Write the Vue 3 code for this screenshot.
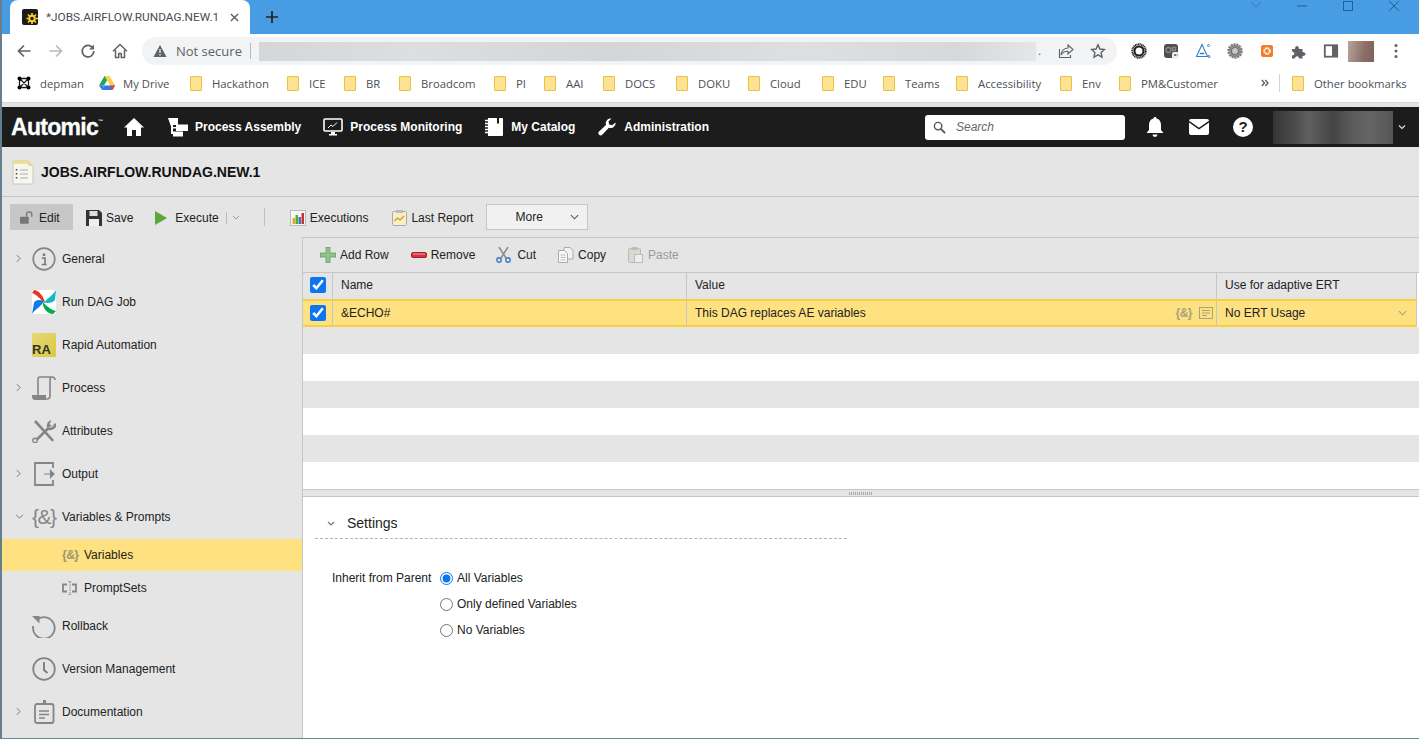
<script setup>
const bookmarks = [
  { label: 'Hackathon', width: 97 }, { label: 'ICE', width: 57 }, { label: 'BR', width: 55 },
  { label: 'Broadcom', width: 95 }, { label: 'PI', width: 50 }, { label: 'AAI', width: 59 },
  { label: 'DOCS', width: 73 }, { label: 'DOKU', width: 72 }, { label: 'Cloud', width: 74 },
  { label: 'EDU', width: 61 }, { label: 'Teams', width: 73 }, { label: 'Accessibility', width: 104 },
  { label: 'Env', width: 59 }, { label: 'PM&Customer', width: 142 }
]
const stripes = [0, 1, 2, 3, 4, 5]
</script>

<template>
  <div class="screen">
    <header class="tabstrip">
      <div class="tab">
        <svg class="favicon" viewBox="0 0 16 16">
          <rect width="16" height="16" rx="2" fill="#1b1b1b" />
          <circle cx="10" cy="9.500" r="2.800" fill="none" stroke="#f5d327" stroke-width="2" />
          <path d="M10 4v2M10 13v2M4.500 9.500h2M13.500 9.500H16M6 5.500l1.500 1.500M12.500 12l1.500 1.500M14 5.500L12.500 7M7.500 12L6 13.500" stroke="#f5d327" stroke-width="1.700" />
        </svg>
        <span class="tab-title">*JOBS.AIRFLOW.RUNDAG.NEW.1</span>
        <svg class="tab-close" viewBox="0 0 10 10"><path d="M1 1l8 8M9 1l-8 8" stroke="#5f6368" stroke-width="1.600" /></svg>
      </div>
      <svg class="new-tab" viewBox="0 0 12 12"><path d="M6 0v12M0 6h12" stroke="#202124" stroke-width="1.700" /></svg>
      <div class="window-controls">
        <svg viewBox="0 0 12 12" class="w-chev"><path d="M1 2l5 5 5-5" fill="none" stroke="#2f79b8" stroke-width="1" /></svg>
        <svg viewBox="0 0 12 12" class="w-min"><path d="M1 6h10" stroke="#26608f" stroke-width="1" /></svg>
        <svg viewBox="0 0 12 12" class="w-max"><rect x="1.500" y="1.500" width="9" height="9" fill="none" stroke="#26608f" stroke-width="1" /></svg>
        <svg viewBox="0 0 12 12" class="w-close"><path d="M1 1l10 10M11 1L1 11" stroke="#26608f" stroke-width="1" /></svg>
      </div>
    </header>

    <div class="browser-bar">
      <div class="nav-buttons">
        <svg viewBox="0 0 16 16"><path d="M14.500 8H2.500M8 2.500L2.500 8 8 13.500" fill="none" stroke="#5f6368" stroke-width="1.700" /></svg>
        <svg viewBox="0 0 16 16"><path d="M1.500 8h12M8 2.500L13.500 8 8 13.500" fill="none" stroke="#b8babc" stroke-width="1.700" /></svg>
        <svg viewBox="0 0 16 16"><path d="M13 5.200A5.800 5.800 0 1 0 13.800 8" fill="none" stroke="#5f6368" stroke-width="1.700" /><path d="M14 1.500v5h-5z" fill="#5f6368" /></svg>
        <svg viewBox="0 0 16 16"><path d="M1 8.200L8 1.500l7 6.700M3.500 7v7.500h3.200v-4h2.600v4h3.200V7" fill="none" stroke="#5f6368" stroke-width="1.500" /></svg>
      </div>
      <div class="omnibox">
        <svg class="warn" viewBox="0 0 14 14"><path d="M7 1l6.500 12H.5z" fill="#5f6368" /><path d="M7 5v4M7 10v1.600" stroke="#f1f3f4" stroke-width="1.300" /></svg>
        <span class="not-secure">Not secure</span>
        <i class="omni-divider"></i>
        <div class="url-blur"></div>
        <span class="url-dot">.</span>
        <svg class="share" viewBox="0 0 16 16"><path d="M10 2l5 4.500L10 11V8.300C6.500 8.300 4.500 9.500 3 12c.4-4 2.600-6.600 7-7z" fill="none" stroke="#5f6368" stroke-width="1.100" /><path d="M1.500 6v8.500h11V12" fill="none" stroke="#5f6368" stroke-width="1.100" /></svg>
        <svg class="star" viewBox="0 0 16 16"><path d="M8 1.800l1.900 4.200 4.600.5-3.400 3.100.9 4.500L8 11.800l-4 2.300.9-4.500-3.400-3.100 4.600-.5z" fill="none" stroke="#5f6368" stroke-width="1.400" /></svg>
      </div>
      <div class="extensions">
        <svg viewBox="0 0 16 16"><circle cx="8" cy="8" r="6.700" fill="none" stroke="#1d1d1d" stroke-width="2" stroke-dasharray="1.100 .5" /><circle cx="8" cy="8" r="4.500" fill="none" stroke="#1d1d1d" stroke-width="2" /></svg>
        <svg viewBox="0 0 16 16"><rect x="1" y="1" width="14" height="14" rx="3" fill="#4f4f4f" /><circle cx="5.500" cy="7" r="2.500" fill="none" stroke="#8a8a8a" stroke-width="1.300" /><path d="M9.500 4.500h3v3h-3z" fill="none" stroke="#8a8a8a" stroke-width="1.300" /><rect x="9" y="9" width="7" height="7" rx="2" fill="#f2f2f2" /><path d="M11 11h2v2h-2zM13 12l1.500-1v2z" fill="#777" /></svg>
        <svg viewBox="0 0 16 16"><path d="M7 1.500L1.500 13.500h11z" fill="none" stroke="#2f7fc4" stroke-width="1.100" /><path d="M4.800 10.500h4.400" stroke="#2f7fc4" stroke-width="1.500" /><circle cx="13.500" cy="2.500" r="1" fill="none" stroke="#2f7fc4" /><circle cx="14" cy="13.500" r="1" fill="none" stroke="#2f7fc4" /></svg>
        <svg viewBox="0 0 16 16"><circle cx="8" cy="8" r="6.200" fill="#9b9b9b" stroke="#7d7d7d" stroke-width="3" stroke-dasharray="2 .7" /><circle cx="8" cy="8" r="3.500" fill="#c8c8c8" stroke="#707070" stroke-width="1.200" /></svg>
        <svg viewBox="0 0 16 16"><rect x="2" y="2" width="12" height="12" rx="2" fill="#f47b2a" /><circle cx="8" cy="8" r="2.800" fill="none" stroke="#fff" stroke-width="2" stroke-dasharray="1.600 .6" /></svg>
        <svg viewBox="0 0 16 16"><path d="M1 6h3c0-4 4-4 4 0h3.500v3c4 0 4 4 0 4V15.500H8c0-3-4-3-4 0H1v-3c3 0 3-4 0-4z" fill="#5f6368" /></svg>
        <svg viewBox="0 0 16 16"><rect x="1.800" y="2.300" width="12.400" height="11.400" fill="none" stroke="#5f6368" stroke-width="1.800" /><rect x="9" y="2" width="5" height="12" fill="#5f6368" /></svg>
      </div>
      <div class="avatar"></div>
      <svg class="kebab" viewBox="0 0 4 16"><circle cx="2" cy="2.500" r="1.500" fill="#5f6368" /><circle cx="2" cy="8" r="1.500" fill="#5f6368" /><circle cx="2" cy="13.500" r="1.500" fill="#5f6368" /></svg>
    </div>

    <nav class="bookmarks">
      <div class="bm bm-depman">
        <svg viewBox="0 0 14 14"><path d="M2.500 2.500h9v9h-9zM2.500 2.500l9 9M11.500 2.500l-9 9" fill="none" stroke="#1c1c1c" stroke-width="1.300" /><circle cx="2.500" cy="2.500" r="2" /><circle cx="11.500" cy="2.500" r="2" /><circle cx="2.500" cy="11.500" r="2" /><circle cx="11.500" cy="11.500" r="2" /></svg>
        <span>depman</span>
      </div>
      <div class="bm bm-drive">
        <svg viewBox="0 0 16 14"><path d="M5.500 0h5L5 9.500H0z" fill="#1fa463" /><path d="M5.500 0h5L16 9.500h-5z" fill="#ffd04b" /><path d="M0 9.500h5.200L3 14z" fill="#3777e3" /><path d="M3 14l2.300-4.500H16L13.500 14z" fill="#3777e3" /><path d="M11 9.500h5L13.500 14z" fill="#ea4335" /></svg>
        <span>My Drive</span>
      </div>
      <div v-for="b in bookmarks" :key="b.label" class="bm bm-folder" :style="{ width: b.width + 'px' }">
        <i class="folder"></i>
        <span>{{ b.label }}</span>
      </div>
      <svg class="chevrons" viewBox="0 0 8 8"><path d="M.8 1l2.700 3-2.700 3M4.300 1L7 4 4.300 7" fill="none" stroke="#5f6368" stroke-width="1.400" /></svg>
      <i class="bm-sep"></i>
      <div class="bm bm-other"><i class="folder"></i><span>Other bookmarks</span></div>
    </nav>

    <div class="browser-edge"></div>

    <div class="app-nav">
      <div class="logo">Automic<sup>™</sup></div>
      <svg class="home" viewBox="0 0 20 18"><path d="M10 0L0 9.500h3V18h5v-6h4v6h5V9.500h3z" fill="#fff" /></svg>
      <div class="nav-item nav-pa">
        <svg viewBox="0 0 20 19"><path d="M0 0h10v7H5v2h3V6.500h12V13H8v-2.500H5V14h0v0h0v0H5v0h0z" fill="#fff" /><path d="M3 7h2v9H3z" fill="#fff" /><rect x="5" y="13.500" width="10" height="5" fill="#fff" /></svg>
        <span>Process Assembly</span>
      </div>
      <div class="nav-item nav-pm">
        <svg viewBox="0 0 20 18"><rect x="1" y="1" width="18" height="12" rx="1" fill="none" stroke="#fff" stroke-width="1.600" /><path d="M5 10l3-3 2 1.500L14 4.500" fill="none" stroke="#fff" /><path d="M8 14h4v2h2v1.500H6V16h2z" fill="#fff" /></svg>
        <span>Process Monitoring</span>
      </div>
      <div class="nav-item nav-mc">
        <svg viewBox="0 0 18 18"><path d="M3 0h14a1 1 0 0 1 1 1v16a1 1 0 0 1-1 1H3z" fill="#fff" /><path d="M12 0h2v6l-1-1-1 1z" fill="#1c1c1c" /><path d="M0 2.500h3.500M0 5.500h3.500M0 8.500h3.500M0 11.500h3.500M0 14.500h3.500" stroke="#fff" stroke-width="1.500" /></svg>
        <span>My Catalog</span>
      </div>
      <div class="nav-item nav-ad">
        <svg viewBox="0 0 18 18"><path d="M17.500 4.500a5 5 0 0 1-6.700 5.300L4 17a2.300 2.300 0 0 1-3.200-3.200L8 7A5 5 0 0 1 13.500.5L10.500 3.500l.7 3 3 .7z" fill="#fff" /></svg>
        <span>Administration</span>
      </div>
      <div class="search">
        <svg viewBox="0 0 14 14"><circle cx="5.500" cy="5.500" r="4" fill="none" stroke="#555" stroke-width="1.500" /><path d="M8.500 8.500L13 13" stroke="#555" stroke-width="2" /></svg>
        <span>Search</span>
      </div>
      <svg class="nav-bell" viewBox="0 0 18 20"><path d="M9 0c1 0 1.500.7 1.500 1.600C13.500 2.300 15 5 15 8v5l2.500 3H.5L3 13V8c0-3 1.500-5.700 4.500-6.400C7.500.7 8 0 9 0zM6.500 17.500h5a2.500 2.500 0 0 1-5 0z" fill="#fff" /></svg>
      <svg class="nav-mail" viewBox="0 0 20 16"><rect width="20" height="16" rx="2" fill="#fff" /><path d="M0 2.500l10 7 10-7" fill="none" stroke="#1c1c1c" stroke-width="1.500" /></svg>
      <div class="nav-help">?</div>
      <div class="user-blur"></div>
      <svg class="user-chev" viewBox="0 0 8 6"><path d="M1 1.500l3 3 3-3" fill="none" stroke="#ddd" stroke-width="1.200" /></svg>
    </div>

    <div class="title-band">
      <svg class="job-icon" viewBox="0 0 22 25">
        <path d="M1 1h15l5 5v18H1z" fill="#f7f7f0" stroke="#c9c9b8" />
        <path d="M16 1l5 5h-5z" fill="#e8dc90" />
        <rect x="1" y="1" width="15" height="3" fill="#efe08e" />
        <path d="M4.500 9v1.500M4.500 13v1.500M4.500 17v1.500" stroke="#444" stroke-width="1.500" />
        <path d="M8 10h8M8 14h8M8 18h8" stroke="#aaa" stroke-width="1.200" />
      </svg>
      <h1>JOBS.AIRFLOW.RUNDAG.NEW.1</h1>
    </div>

    <div class="toolbar">
      <div class="tool tool-edit">
        <svg viewBox="0 0 16 14"><rect x="0" y="6" width="10" height="8" rx="1" fill="#777" /><path d="M7.500 6V3.500a3 3 0 0 1 6 0V6" fill="none" stroke="#777" stroke-width="1.500" /></svg>
        <span>Edit</span>
      </div>
      <div class="tool tool-save">
        <svg viewBox="0 0 16 16"><path d="M0 0h13l3 3v13H0z" fill="#333" /><rect x="3.500" y="1" width="8" height="5" fill="#ddd" /><rect x="3" y="9" width="10" height="7" fill="#eee" /></svg>
        <span>Save</span>
      </div>
      <div class="tool tool-exec">
        <svg viewBox="0 0 12 14"><path d="M0 0l12 7-12 7z" fill="#5aa73c" /></svg>
        <span>Execute</span>
        <i class="tool-mini-sep"></i>
        <svg class="mini-chev" viewBox="0 0 8 6"><path d="M1 1l3 3 3-3" fill="none" stroke="#999" /></svg>
      </div>
      <i class="tool-sep"></i>
      <div class="tool tool-runs">
        <svg viewBox="0 0 16 16"><rect x=".5" y=".5" width="15" height="15" fill="#f7f7f7" stroke="#bbb" /><rect x="2.500" y="8" width="2.500" height="6" fill="#e8a91d" /><rect x="5.500" y="5" width="2.500" height="9" fill="#5aa73c" /><rect x="8.500" y="7" width="2.500" height="7" fill="#3a78c2" /><rect x="11.500" y="3" width="2.500" height="11" fill="#c93030" /></svg>
        <span>Executions</span>
      </div>
      <div class="tool tool-report">
        <svg viewBox="0 0 15 16"><rect x=".5" y="1.500" width="14" height="14" rx="1" fill="#f5efc8" stroke="#aaa" /><rect x="4" y="0" width="7" height="3" fill="#bbb" /><path d="M2.500 11l3-3 2.500 2 4-4" fill="none" stroke="#d29a1a" stroke-width="1.300" /></svg>
        <span>Last Report</span>
      </div>
      <div class="more-btn">
        <span>More</span>
        <svg viewBox="0 0 10 6"><path d="M1 1l4 4 4-4" fill="none" stroke="#555" stroke-width="1.200" /></svg>
      </div>
    </div>

    <div class="workspace">
      <aside class="sidebar">
        <div class="side-row">
          <svg class="arrow" viewBox="0 0 6 10"><path d="M1 1l4 4-4 4" fill="none" stroke="#777" stroke-width="1.200" /></svg>
          <svg class="side-icon" viewBox="0 0 24 24"><circle cx="12" cy="12" r="10.800" fill="none" stroke="#858585" stroke-width="1.700" /><path d="M12 6.500v2.500" stroke="#777" stroke-width="2.400" /><path d="M9.800 11h3.200v6.500h1.500M9.800 17.500H14" fill="none" stroke="#777" stroke-width="1.600" /></svg>
          <span>General</span>
        </div>
        <div class="side-row">
          <svg class="side-icon" viewBox="0 0 24 24">
            <rect width="24" height="24" fill="#fff" />
            <path d="M13 13C12 7 8 1 2 0L0 3c4 1 8 6 13 10z" fill="#e43921" />
            <path d="M12 11C7 9 3 10 2 13L0 24c3-5 9-7 12-13z" fill="#0c7ce8" />
            <path d="M11 12c-1 5 4 12 10 12l3-3c-4-1-9-4-13-9z" fill="#00ad46" />
            <path d="M12 12.500c5 1 9 0 11-2.500l1-10c-3 5-8 8-12 12.500z" fill="#11b8c8" />
          </svg>
          <span>Run DAG Job</span>
        </div>
        <div class="side-row">
          <div class="ra-icon">RA</div>
          <span>Rapid Automation</span>
        </div>
        <div class="side-row">
          <svg class="arrow" viewBox="0 0 6 10"><path d="M1 1l4 4-4 4" fill="none" stroke="#777" stroke-width="1.200" /></svg>
          <svg class="side-icon" viewBox="0 0 24 24"><path d="M6 21V3c0-1.500 1-2 2-2h12c2 0 3 1 3 3M20 1c-1.500 0-2 1-2 2.500V20c0 2-1 3-3 3" fill="none" stroke="#858585" stroke-width="1.600" /><path d="M0 19h14v1.500c0 1.500.5 2.500 1 3.500H3c-2 0-3-1.500-3-3z" fill="#858585" /></svg>
          <span>Process</span>
        </div>
        <div class="side-row">
          <svg class="side-icon" viewBox="0 0 24 24"><path d="M4 1l18 20-1.700 1.800L2 3z" fill="#858585" /><path d="M23.500 4.500A5.500 5.500 0 0 1 16 9.500L4.800 20.500" fill="none" stroke="#858585" stroke-width="2.600" /><path d="M23.500 4.500l-3.500 2.500-2.500-2 2-4a5.500 5.500 0 0 0-4 8z" fill="#858585" /><circle cx="3" cy="21.500" r="2.200" fill="none" stroke="#858585" stroke-width="1.400" /></svg>
          <span>Attributes</span>
        </div>
        <div class="side-row">
          <svg class="arrow" viewBox="0 0 6 10"><path d="M1 1l4 4-4 4" fill="none" stroke="#777" stroke-width="1.200" /></svg>
          <svg class="side-icon" viewBox="0 0 24 24"><path d="M21 6V1H3v22h18v-5" fill="none" stroke="#858585" stroke-width="1.800" /><path d="M12 12h10M18.500 8.500L22 12l-3.500 3.500z" fill="#858585" stroke="#858585" stroke-width="1.200" /></svg>
          <span>Output</span>
        </div>
        <div class="side-row">
          <svg class="arrow arrow-open" viewBox="0 0 10 6"><path d="M1 1l4 4 4-4" fill="none" stroke="#777" stroke-width="1.200" /></svg>
          <span class="var-icon">{&amp;}</span>
          <span>Variables &amp; Prompts</span>
        </div>
        <div class="side-sub side-sub-first selected">
          <span class="var-mini">{&amp;}</span>
          <span>Variables</span>
        </div>
        <div class="side-sub side-sub-second">
          <svg class="sub-icon" viewBox="0 0 16 14"><path d="M5 3H1v7h4M10 3h4v7h-4" fill="none" stroke="#858585" stroke-width="1.800" transform="translate(0 .5)" /><path d="M8 1v12M6.500.5h3M6.500 13.500h3" stroke="#858585" stroke-dasharray="1.500 1" fill="none" /></svg>
          <span>PromptSets</span>
        </div>
        <div class="side-row side-row-after">
          <svg class="side-icon" viewBox="0 0 24 24"><path d="M4.500 6A10.800 10.800 0 1 1 1.200 12" fill="none" stroke="#858585" stroke-width="1.800" /><path d="M0 1h7.500v7.500z" fill="#858585" transform="translate(0 1)" /></svg>
          <span>Rollback</span>
        </div>
        <div class="side-row">
          <svg class="side-icon" viewBox="0 0 24 24"><circle cx="12" cy="12" r="10.800" fill="none" stroke="#858585" stroke-width="1.800" /><path d="M12 5v8l3.500 3" fill="none" stroke="#777" stroke-width="1.800" /></svg>
          <span>Version Management</span>
        </div>
        <div class="side-row">
          <svg class="arrow" viewBox="0 0 6 10"><path d="M1 1l4 4-4 4" fill="none" stroke="#777" stroke-width="1.200" /></svg>
          <svg class="side-icon" viewBox="0 0 24 24"><rect x="3" y="4" width="18.500" height="19" rx="2" fill="none" stroke="#858585" stroke-width="1.800" /><path d="M8 5V3h3V0h3v3h3v2z" fill="#858585" /><path d="M7 11h10M7 14.500h10M7 18h6" stroke="#858585" stroke-width="1.500" /></svg>
          <span>Documentation</span>
        </div>
      </aside>

      <main class="main">
        <div class="actions">
          <div class="action a-add">
            <svg viewBox="0 0 16 16"><path d="M6 0h4v6h6v4h-6v6H6v-6H0V6h6z" fill="#8fc488" stroke="#4f8a4a" stroke-width=".6" /></svg>
            <span>Add Row</span>
          </div>
          <div class="action a-remove">
            <svg viewBox="0 0 16 6"><rect x=".5" y=".5" width="15" height="5" rx="1.500" fill="#d9333f" stroke="#a52028" /><path d="M2 2h12" stroke="#f0a0a0" /></svg>
            <span>Remove</span>
          </div>
          <div class="action a-cut">
            <svg viewBox="0 0 15 16"><path d="M3 0l7 11M12 0L5 11" stroke="#8a8a8a" stroke-width="1.500" /><circle cx="3" cy="13" r="2.200" fill="none" stroke="#3a78c2" stroke-width="1.400" /><circle cx="12" cy="13" r="2.200" fill="none" stroke="#3a78c2" stroke-width="1.400" /></svg>
            <span>Cut</span>
          </div>
          <div class="action a-copy">
            <svg viewBox="0 0 16 16"><path d="M6 .5h6l3 3V12H6z" fill="#f2f2f2" stroke="#aaa" /><path d="M.5 3.500h6l3 3v9h-9z" fill="#f8f8f8" stroke="#aaa" /><path d="M2.500 8h5M2.500 10.500h5M2.500 13h5" stroke="#bbb" /></svg>
            <span>Copy</span>
          </div>
          <div class="action a-paste">
            <svg viewBox="0 0 15 16"><rect x=".5" y="1.500" width="12" height="14" rx="1" fill="#ddd8ce" stroke="#bbb" /><rect x="3.500" y="0" width="6" height="3" fill="#bbb" /><rect x="6.500" y="7.500" width="8" height="8" fill="#eee" stroke="#bbb" /></svg>
            <span>Paste</span>
          </div>
        </div>

        <div class="grid-row grid-head">
          <div class="c-check"><input type="checkbox" checked /></div>
          <div class="c-name">Name</div>
          <div class="c-value">Value</div>
          <div class="c-ert">Use for adaptive ERT</div>
        </div>
        <div class="grid-row grid-selected">
          <div class="c-check"><input type="checkbox" checked /></div>
          <div class="c-name">&amp;ECHO#</div>
          <div class="c-value">
            <span class="value-text">This DAG replaces AE variables</span>
            <span class="value-var">{&amp;}</span>
            <svg class="value-note" viewBox="0 0 14 12"><rect x=".5" y=".5" width="13" height="11" fill="none" stroke="#a8a17a" /><path d="M3 3.500h8M3 6h8M3 8.500h5" stroke="#a8a17a" /></svg>
          </div>
          <div class="c-ert">
            <span class="value-text">No ERT Usage</span>
            <svg class="ert-chev" viewBox="0 0 10 6"><path d="M1 1l4 4 4-4" fill="none" stroke="#a8a17a" stroke-width="1.200" /></svg>
          </div>
        </div>
        <div v-for="s in stripes" :key="s" class="stripe" :class="{ 'stripe-gray': s % 2 === 0 }"></div>

        <div class="splitter"><i class="grip"></i></div>

        <section class="settings">
          <div class="settings-head">
            <svg viewBox="0 0 8 6"><path d="M1 1l3 3 3-3" fill="none" stroke="#777" stroke-width="1.200" /></svg>
            <span>Settings</span>
          </div>
          <div class="inherit">
            <div class="inherit-label">Inherit from Parent</div>
            <div class="radios">
              <label><input type="radio" name="inherit" checked /><span>All Variables</span></label>
              <label><input type="radio" name="inherit" /><span>Only defined Variables</span></label>
              <label><input type="radio" name="inherit" /><span>No Variables</span></label>
            </div>
          </div>
        </section>
      </main>
    </div>
  </div>
</template>

<style>
html, body { margin: 0; padding: 0; overflow: hidden; }
</style>

<style scoped>
* { box-sizing: border-box; }
.screen {
  width: 1419px; height: 739px; overflow: hidden;
  display: flex; flex-direction: column;
  border-left: 2px solid #64808f;
  border-bottom: 1px solid #5f8a8f;
  background: #fff;
  font: 12px "Liberation Sans", Arial, sans-serif;
  color: #222;
}
svg { display: block; flex: none; }

/* Browser chrome */
.tabstrip { height: 34px; background: #479ce3; display: flex; align-items: flex-end; position: relative; flex: none; }
.tab {
  margin-left: 8px; width: 240px; height: 34px; background: #fff;
  border-radius: 8px 8px 0 0; display: flex; align-items: center; padding: 0 0 0 12px;
}
.favicon { width: 16px; height: 16px; }
.tab-title { margin-left: 8px; width: 180px; overflow: hidden; white-space: nowrap; font: 11.800px Roboto, sans-serif; color: #4a4d51; }
.tab-close { width: 9px; height: 9px; margin-left: 4px; }
.new-tab { width: 12px; height: 12px; margin: 0 0 11px 16px; }
.window-controls { position: absolute; top: 0; left: 1248px; display: flex; }
.window-controls svg { width: 12px; height: 12px; margin-right: 34px; }

.browser-bar { height: 34px; display: flex; align-items: center; flex: none; background: #fff; }
.nav-buttons { display: flex; margin-left: 14px; width: 126px; }
.nav-buttons svg { width: 16px; height: 16px; margin-right: 16px; }
.omnibox {
  width: 975px; height: 28px; border-radius: 14px; background: #f1f3f4;
  display: flex; align-items: center; padding-left: 11px;
}
.warn { width: 14px; height: 14px; }
.not-secure { margin-left: 9px; font: 13px "Open Sans", sans-serif; color: #5f6368; width: 74px; white-space: nowrap; }
.omni-divider { width: 1px; height: 16px; background: #b5b7ba; }
.url-blur {
  width: 777px; height: 19px; margin-left: 8px;
  background: linear-gradient(90deg, #d4d6d7, #dcdedf 20%, #d3d5d6 45%, #dddfe0 70%, #d6d8d9 90%, #e4e6e7);
}
.url-dot { margin-left: 2px; width: 18px; color: #5f6368; }
.share { width: 16px; height: 16px; margin-left: 2px; }
.star { width: 16px; height: 16px; margin-left: 16px; }
.extensions { display: flex; margin-left: 14px; }
.extensions svg { width: 16px; height: 16px; margin-right: 16px; }
.avatar { width: 26px; height: 21px; margin-left: -7px; background: linear-gradient(100deg, #b9a49c, #8d6f68 60%, #7f5f5a); }
.kebab { width: 4px; height: 16px; margin-left: 20px; }

.bookmarks { height: 34px; padding-bottom: 4px; display: flex; align-items: center; flex: none; background: #fff; font: 11.300px "Open Sans", sans-serif; color: #4c4f54; white-space: nowrap; }
.bm { display: flex; align-items: center; flex: none; }
.bm-depman { width: 82px; margin-left: 15px; }
.bm-depman svg { width: 14px; height: 14px; margin-right: 9px; }
.bm-drive { width: 91px; }
.bm-drive svg { width: 16px; height: 14px; margin-right: 8px; }
.folder { width: 12px; height: 15px; flex: none; margin-right: 10px; background: #fde293; border: 1px solid #e8c33e; border-radius: 1px; }
.chevrons { width: 8px; height: 8px; margin-right: 10px; }
.bm-sep { width: 1px; height: 18px; background: #d0d2d4; margin: 0 12px 0 0; }
.browser-edge { height: 5px; flex: none; background: #e3e3e3; border-top: 1px solid #d6d6d6; }

/* App nav */
.app-nav { height: 40px; flex: none; background: #1c1c1c; display: flex; align-items: center; position: relative; color: #fff; }
.logo { margin-left: 9px; width: 113px; font: bold 23px "Liberation Sans", sans-serif; letter-spacing: -.7px; white-space: nowrap; -webkit-text-stroke: .3px #fff; }
.logo sup { font-size: 5px; vertical-align: 12px; letter-spacing: 0; -webkit-text-stroke: 0; }
.home { width: 20px; height: 18px; }
.nav-item { display: flex; align-items: center; font-weight: bold; white-space: nowrap; }
.nav-item span { margin-left: 7px; }
.nav-pa { margin-left: 24px; } .nav-pa svg { width: 20px; height: 19px; }
.nav-pm { margin-left: 22px; } .nav-pm svg { width: 20px; height: 18px; }
.nav-mc { margin-left: 23px; } .nav-mc svg { width: 18px; height: 18px; } .nav-mc span { margin-left: 8px; }
.nav-ad { margin-left: 23px; } .nav-ad svg { width: 18px; height: 18px; } .nav-ad span { margin-left: 8px; }
.search {
  margin-left: 216px; width: 200px; height: 25px; background: #fff; border-radius: 3px;
  display: flex; align-items: center; padding-left: 8px; color: #666; font-style: italic; font-size: 12px;
}
.search svg { width: 13px; height: 13px; margin-right: 10px; }
.nav-bell { width: 18px; height: 20px; margin-left: 21px; }
.nav-mail { width: 20px; height: 16px; margin-left: 25px; }
.nav-help { width: 20px; height: 20px; margin-left: 24px; border-radius: 50%; background: #fff; color: #1c1c1c; font: bold 15px/20px "Liberation Sans", sans-serif; text-align: center; }
.user-blur { width: 120px; height: 33px; margin-left: 20px; background: linear-gradient(90deg, #343434, #4c4c4c 18%, #606060 30%, #444 50%, #5a5a5a 65%, #666 80%, #555); }
.user-chev { width: 8px; height: 6px; margin-left: 5px; }

/* Title */
.title-band { height: 50px; flex: none; background: #e5e5e5; display: flex; align-items: center; padding-left: 10px; padding-top: 1px; border-bottom: 1px solid #c6c6c6; }
.job-icon { width: 22px; height: 25px; }
.title-band h1 { margin: 0 0 0 7px; font: bold 14px "Liberation Sans", sans-serif; color: #111; }

.toolbar { height: 41px; flex: none; background: #e5e5e5; display: flex; align-items: center; padding-left: 8px; border-bottom: 1px solid #c6c6c6; }
.tool { display: flex; align-items: center; height: 26px; padding-top: 1px; }
.tool-edit { width: 63px; background: #c7c7c7; padding-left: 10px; }
.tool-edit svg { width: 14px; height: 13px; margin-right: 5px; }
.tool-save { margin-left: 13px; }
.tool-save svg { width: 16px; height: 16px; margin-right: 4px; }
.tool-exec { margin-left: 22px; }
.tool-exec svg:first-child { width: 12px; height: 14px; margin-right: 8px; }
.tool-mini-sep { width: 1px; height: 12px; background: #bbb; margin-left: 7px; }
.mini-chev { width: 8px; height: 6px; margin-left: 5px; }
.tool-sep { width: 1px; height: 18px; background: #c0c0c0; margin-left: 24px; }
.tool-runs { margin-left: 25px; }
.tool-runs svg { width: 16px; height: 16px; margin-right: 4px; }
.tool-report { margin-left: 24px; }
.tool-report svg { width: 15px; height: 16px; margin-right: 4px; }
.more-btn {
  margin-left: 13px; width: 102px; height: 26px; background: #f1f1f1; border: 1px solid #c4c4c4;
  display: flex; align-items: center; padding-left: 28px;
}
.more-btn svg { width: 9px; height: 6px; margin-left: auto; margin-right: 8px; }

/* Workspace */
.workspace { flex: 1; display: flex; min-height: 0; }
.sidebar { width: 301px; flex: none; background: #e5e5e5; border-right: 1px solid #c6c6c6; margin-top: -1px; }
.side-row { height: 43px; display: flex; align-items: center; position: relative; padding-left: 30px; font-size: 12px; }
.side-row .side-icon, .side-row .ra-icon, .side-row .var-icon { margin-right: 6px; }
.side-icon { width: 24px; height: 24px; }
.arrow { position: absolute; left: 14px; top: 17px; width: 5px; height: 9px; }
.arrow-open { left: 13px; top: 19px; width: 9px; height: 5px; }
.ra-icon {
  width: 24px; height: 24px; flex: none; background: linear-gradient(135deg, #e5d878, #dcc93f);
  border-radius: 1px; font: bold 13px/33px "Liberation Sans", sans-serif; color: #333; overflow: hidden;
}
.var-icon { width: 24px; font: 21px "Liberation Sans", sans-serif; color: #858585; letter-spacing: -1.500px; white-space: nowrap; }
.side-sub { height: 32px; display: flex; align-items: center; padding-left: 60px; }
.side-sub-first { margin-top: 1px; }
.side-sub-second { padding-top: 1px; }
.selected { background: #fee180; }
.var-mini { width: 22px; font: bold 12px "Liberation Sans", sans-serif; color: #9c9572; letter-spacing: -.5px; white-space: nowrap; }
.sub-icon { width: 16px; height: 14px; margin-right: 6px; }
.side-row-after { margin-top: 1px; }

.main { flex: 1; background: #fff; display: flex; flex-direction: column; min-width: 0; }
.actions { height: 35px; flex: none; background: #e5e5e5; display: flex; align-items: center; padding-left: 17px; border-bottom: 1px solid #c6c6c6; }
.action { display: flex; align-items: center; }
.action svg { margin-right: 4px; }
.a-add svg { width: 16px; height: 16px; }
.a-remove { margin-left: 22px; } .a-remove svg { width: 16px; height: 6px; }
.a-cut { margin-left: 21px; } .a-cut svg { width: 15px; height: 16px; margin-right: 6px; }
.a-copy { margin-left: 22px; } .a-copy svg { width: 16px; height: 16px; }
.a-paste { margin-left: 22px; color: #999; } .a-paste svg { width: 15px; height: 16px; margin-right: 5px; }

.grid-row { display: flex; flex: none; width: 1114px; }
.grid-row > div { display: flex; align-items: center; padding-left: 8px; border-right: 1px solid #c6c6c6; height: 100%; }
.grid-head { height: 26px; background: #e5e5e5; }
.grid-head > div { padding-bottom: 2px; }
.grid-selected { height: 28px; background: #fee180; border-top: 2px solid #f8cf3c; border-bottom: 2px solid #f8cf3c; }
.c-check { width: 30px; padding-left: 7px !important; }
.c-name { width: 354px; }
.c-value { width: 530px; }
.c-ert { width: 200px; }
.c-check input { width: 16px; height: 16px; margin: 0; accent-color: #0b76f0; }
.value-text { flex: 1; }
.value-var { font: bold 12px "Liberation Sans", sans-serif; color: #a8a17a; margin-right: 7px; letter-spacing: -.5px; }
.value-note { width: 14px; height: 12px; margin-right: 3px; }
.ert-chev { width: 9px; height: 6px; margin-right: 9px; }
.stripe { height: 27px; flex: none; background: #fff; }
.stripe-gray { background: #e5e5e5; }

.splitter { height: 8px; flex: none; background: #e5e5e5; border-top: 1px solid #c6c6c6; border-bottom: 1px solid #c6c6c6; display: flex; align-items: center; justify-content: center; padding-left: 0; }
.grip { width: 24px; height: 3px; background: repeating-linear-gradient(90deg, #aaa 0 1px, transparent 1px 2px); }

.settings { flex: 1; padding: 16px 0 0 12px; }
.settings-head { width: 532px; height: 26px; border-bottom: 1px dashed #b4b4b4; display: flex; align-items: flex-start; padding: 2px 0 0 12px; font-size: 14px; }
.settings-head svg { width: 8px; height: 6px; margin: 6px 12px 0 0; }
.inherit { display: flex; margin: 32px 0 0 17px; }
.inherit-label { width: 108px; line-height: 14px; white-space: nowrap; }
.radios { display: flex; flex-direction: column; gap: 12px; }
.radios label { display: flex; align-items: center; height: 14px; }
.radios input { width: 13px; height: 13px; margin: 0 4px 0 0; accent-color: #0b76f0; }
</style>
